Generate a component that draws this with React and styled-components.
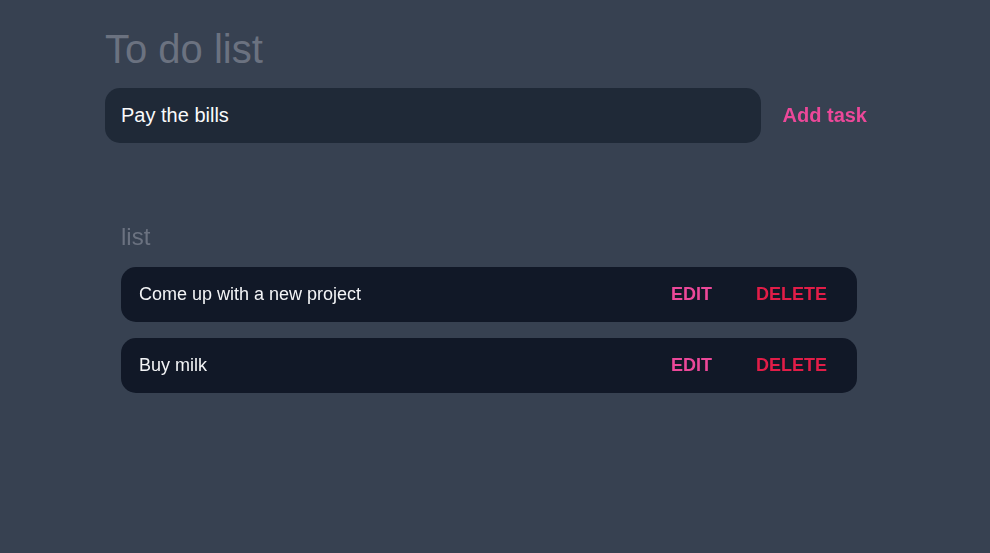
import React, { useState } from "react";
import styled, { createGlobalStyle } from "styled-components";

const GlobalStyle = createGlobalStyle`
  html, body {
    margin: 0;
    padding: 0;
    background: #374151;
    font-family: "Liberation Sans", Arial, sans-serif;
  }
`;

const Page = styled.div`
  min-height: 553px;
  background: #374151;
  padding-top: 26px;
  box-sizing: border-box;
`;

const Container = styled.div`
  width: 780px;
  margin: 0 auto;
`;

const Title = styled.h1`
  margin: 0 0 16px;
  font-size: 40px;
  line-height: 46px;
  font-weight: 400;
  color: #6b7280;
`;

const Form = styled.form`
  display: flex;
  align-items: center;
  gap: 4px;
`;

const TaskInput = styled.input`
  flex: 1;
  height: 55px;
  box-sizing: border-box;
  padding: 0 16px;
  border: none;
  border-radius: 15px;
  background: #1f2937;
  color: #f9fafb;
  caret-color: #f9fafb;
  font-family: inherit;
  font-size: 20px;
  outline: none;
`;

const AddButton = styled.button`
  background: none;
  border: none;
  padding: 0 18px;
  color: #ec4899;
  font-family: inherit;
  font-size: 20px;
  font-weight: 700;
  cursor: pointer;
`;

const ListSection = styled.section`
  width: 736px;
  margin: 80px 16px 0;
`;

const ListHeading = styled.h2`
  margin: 0 0 16px;
  font-size: 24px;
  line-height: 28px;
  font-weight: 400;
  color: #6b7280;
`;

const Items = styled.ul`
  list-style: none;
  margin: 0;
  padding: 0;
  display: flex;
  flex-direction: column;
  gap: 16px;
`;

const Item = styled.li`
  display: flex;
  align-items: center;
  justify-content: space-between;
  height: 55px;
  padding: 0 16px 0 18px;
  border-radius: 15px;
  background: #111827;
`;

const ItemText = styled.span`
  color: #f3f4f6;
  font-size: 18px;
`;

const Actions = styled.div`
  display: flex;
  gap: 16px;
`;

const ActionButton = styled.button`
  background: none;
  border: none;
  padding: 0 14px;
  font-family: inherit;
  font-size: 18px;
  font-weight: 700;
  text-transform: uppercase;
  color: ${(p) => (p.$danger ? "#e11d48" : "#ec4899")};
  cursor: pointer;
`;

export default function App() {
  const [task, setTask] = useState("Pay the bills");
  const [todos, setTodos] = useState([
    "Come up with a new project",
    "Buy milk",
  ]);

  const addTask = (e) => {
    e.preventDefault();
    if (!task.trim()) return;
    setTodos([...todos, task]);
    setTask("");
  };

  const deleteItem = (index) => {
    setTodos(todos.filter((_, i) => i !== index));
  };

  return (
    <>
      <GlobalStyle />
      <Page>
        <Container>
          <Title>To do list</Title>
          <Form onSubmit={addTask}>
            <TaskInput
              autoFocus
              value={task}
              onChange={(e) => setTask(e.target.value)}
            />
            <AddButton type="submit">Add task</AddButton>
          </Form>
          <ListSection>
            <ListHeading>list</ListHeading>
            <Items>
              {todos.map((todo, index) => (
                <Item key={index}>
                  <ItemText>{todo}</ItemText>
                  <Actions>
                    <ActionButton>Edit</ActionButton>
                    <ActionButton $danger onClick={() => deleteItem(index)}>
                      Delete
                    </ActionButton>
                  </Actions>
                </Item>
              ))}
            </Items>
          </ListSection>
        </Container>
      </Page>
    </>
  );
}
